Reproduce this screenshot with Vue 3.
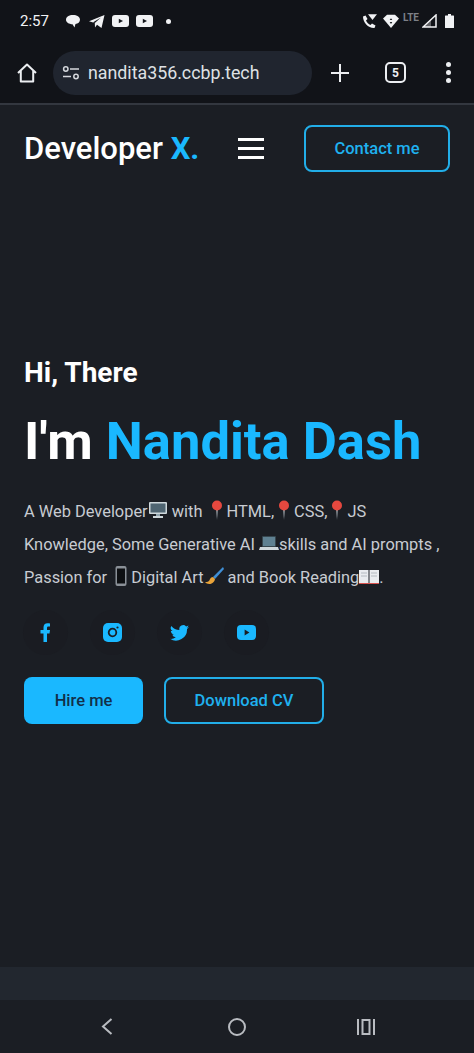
<template>
  <div class="phone">
    <header class="chrome">
      <div class="status">
        <span class="time">2:57</span>
        <div class="status-left">
          <svg width="16" height="15" viewBox="0 0 16 15"><path d="M8 1c4 0 7 1.800 7 4.700 0 2.300-2 4-4.500 4.400L9.500 13.500 7.500 10.300C4 10 1 8.300 1 5.700 1 2.800 4 1 8 1z" fill="#f1f2f4"/></svg>
          <svg width="17" height="15" viewBox="0 0 17 15"><path d="M16.500 1 13.500 14 9 10.800 7 13.500 6.800 9 1 7.200zM6.800 9l6.200-5.500-7.800 4.800z" fill="#f1f2f4"/></svg>
          <svg v-for="n in 2" :key="n" width="17" height="12" viewBox="0 0 17 12"><rect width="17" height="12" rx="3" fill="#f1f2f4"/><path d="M6.800 3.700v4.600L11 6z" fill="#14161b"/></svg>
          <i class="dot"></i>
        </div>
        <div class="status-right">
          <svg width="16" height="16" viewBox="0 0 16 16"><path d="M1 3.500 3.500 2.500 5.500 6 4 7.500C5 9.500 6.500 11 8.500 12l1.500-1.500 3.500 2-1 2.500C6.500 15.500 1 9.500 1 3.500z" fill="#f1f2f4"/><path d="M6 1.200h9l-1.800 2.400L10.500 7 7.800 3.600z" fill="#f1f2f4"/></svg>
          <svg class="wifi" width="18" height="15" viewBox="0 0 18 15"><path d="M1 4.500 5 .8h8l4 3.700L9 14z" fill="#f1f2f4"/><path d="M9 4.300 7.700 6h2.600zM9 10 7.700 8h2.600z" fill="#14161b"/></svg>
          <span class="lte">LTE</span>
          <svg class="signal" width="15" height="14" viewBox="0 0 15 14"><path d="M14 1v12H1z" fill="none" stroke="#f1f2f4" stroke-width="1.500"/><path d="M1 13 9 5v8z" fill="#f1f2f4" opacity=".35"/></svg>
          <svg class="battery" width="9" height="14" viewBox="0 0 9 14"><path d="M3 0h3v1.500h2.500a.5.500 0 0 1 .5.500v11.500a.5.500 0 0 1-.5.500h-8a.5.500 0 0 1-.5-.500V2a.5.500 0 0 1 .5-.500H3z" fill="#f1f2f4"/></svg>
        </div>
      </div>
      <div class="toolbar">
        <svg class="home" width="22" height="22" viewBox="0 0 22 22"><path d="M2 11 11 2.500 20 11M4.800 9v10.500h12.400V9" fill="none" stroke="#eceef1" stroke-width="2" stroke-linejoin="round"/></svg>
        <div class="url">
          <svg width="18" height="14" viewBox="0 0 18 14" fill="none" stroke="#d5d8dd" stroke-width="1.500"><circle cx="3.800" cy="3" r="2.200"/><path d="M8 3h9M1 10.500h8"/><circle cx="14" cy="10.500" r="2.200"/></svg>
          <span>nandita356.ccbp.tech</span>
        </div>
        <svg class="plus" width="18" height="18" viewBox="0 0 18 18"><path d="M9 0v18M0 9h18" stroke="#eceef1" stroke-width="2"/></svg>
        <span class="tabs">5</span>
        <div class="more"><i></i><i></i><i></i></div>
      </div>
    </header>

    <main class="page">
      <nav class="nav">
        <span class="logo">Developer <b>X.</b></span>
        <div class="burger"><i></i><i></i><i></i></div>
        <button class="btn outline contact">Contact me</button>
      </nav>

      <section class="hero">
        <h2>Hi, There</h2>
        <h1>I'm <span>Nandita Dash</span></h1>
        <p>
          A Web Developer<svg class="emoji" viewBox="0 0 20 20"><rect x="1" y="2" width="18" height="12" rx="1" fill="#cfd8dc"/><rect x="2.500" y="3.500" width="15" height="9" fill="#4f6572"/><path d="M8 14h4v2H8z" fill="#90a4ae"/><rect x="5" y="16" width="10" height="2" fill="#cfd8dc"/></svg> with
          <svg class="emoji" viewBox="0 0 20 20"><use href="#pin-shape"/></svg>HTML,<svg class="emoji" viewBox="0 0 20 20"><use href="#pin-shape"/></svg>CSS,<svg class="emoji" viewBox="0 0 20 20"><use href="#pin-shape"/></svg>JS<br>
          Knowledge, Some Generative AI <svg class="emoji" viewBox="0 0 20 20"><rect x="3" y="3" width="14" height="11" rx="1" fill="#37474f"/><rect x="4" y="4" width="12" height="9" fill="#5f8192"/><path d="M1 14h18l1 3H0z" fill="#cfd8dc"/></svg>skills and AI prompts ,<br>
          Passion for <svg class="emoji" viewBox="0 0 20 20"><rect x="4.500" y="0" width="11" height="20" rx="2" fill="#8a9097"/><rect x="6" y="2.500" width="8" height="15" fill="#0d0f12"/></svg>Digital Art<svg class="emoji" viewBox="0 0 20 20"><path d="M19 1 9 11l2 2L20 3z" fill="#3f8fd6"/><path d="M9 11c-3 0-3 3-4 4s-3 1-4 1c2 3 9 3 10-3z" fill="#e8a33a"/></svg> and Book Reading<svg class="emoji" viewBox="0 0 20 20"><path d="M0 4h9.500v13H0zM10.500 4H20v13h-9.500z" fill="#e9ecef"/><path d="M2 7h6M2 10h6M12 7h6M12 10h6" stroke="#b4bac0"/><path d="M0 17h20v1H0z" fill="#d9534f"/></svg>.
        </p>
        <div class="socials">
          <a class="social">
            <svg width="12" height="19" viewBox="0 0 12 19"><path d="M3.500 19v-8.500H.5V7h3V4.500C3.500 1.800 5 .3 7.600.3c1.200 0 2.400.2 2.400.2v3H8.500C7.300 3.500 7 4.200 7 5v2h3l-.5 3.500H7V19z" fill="#1ab8ff"/></svg>
          </a>
          <a class="social">
            <svg width="19" height="19" viewBox="0 0 19 19"><rect width="19" height="19" rx="5" fill="#1ab8ff"/><circle cx="9.500" cy="9.500" r="3.800" fill="none" stroke="#1b1e24" stroke-width="1.800"/><circle cx="14.500" cy="4.500" r="1.100" fill="#1b1e24"/></svg>
          </a>
          <a class="social">
            <svg width="19" height="16" viewBox="0 0 24 20"><path d="M24 2.400a10 10 0 0 1-2.800.8A5 5 0 0 0 23.400.5a10 10 0 0 1-3.100 1.200 4.900 4.900 0 0 0-8.400 4.500A14 14 0 0 1 1.700 1a4.900 4.900 0 0 0 1.500 6.600 5 5 0 0 1-2.200-.6c0 2.400 1.700 4.400 3.900 4.900a5 5 0 0 1-2.200.1 4.900 4.900 0 0 0 4.600 3.400A9.900 9.900 0 0 1 0 17.400 14 14 0 0 0 21.500 5c1-.7 1.900-1.600 2.500-2.600z" fill="#1ab8ff"/></svg>
          </a>
          <a class="social">
            <svg width="19" height="15" viewBox="0 0 19 15"><rect width="19" height="15" rx="4" fill="#1ab8ff"/><path d="M7.600 4.600v5.800l4.800-2.900z" fill="#1b1e24"/></svg>
          </a>
        </div>
        <div class="actions">
          <button class="btn solid">Hire me</button>
          <button class="btn outline cv">Download CV</button>
        </div>
      </section>
    </main>

    <div class="strip"></div>
    <footer class="sysnav">
      <svg width="12" height="17" viewBox="0 0 12 17"><path d="M10.500 1 2 8.500l8.500 7.500" fill="none" stroke="#b9bcc1" stroke-width="2"/></svg>
      <svg class="circle" width="18" height="18" viewBox="0 0 18 18"><circle cx="9" cy="9" r="8" fill="none" stroke="#b9bcc1" stroke-width="2"/></svg>
      <svg width="18" height="16" viewBox="0 0 18 16" fill="none" stroke="#b9bcc1" stroke-width="2"><path d="M1 0v16M17 0v16"/><rect x="5.500" y="1" width="7" height="14"/></svg>
    </footer>

    <svg width="0" height="0" class="defs"><defs><g id="pin-shape"><path d="M9.200 9h1.600l-.8 11z" fill="#b8bfc5"/><circle cx="10" cy="5.500" r="5" fill="#e5483f"/></g></defs></svg>
  </div>
</template>

<script setup>
</script>

<style>
html,
body {
  margin: 0;
  background: #1b1e24;
}
</style>

<style scoped>
.phone {
  width: 474px;
  height: 1053px;
  display: flex;
  flex-direction: column;
  overflow: hidden;
  font-family: Roboto, "Liberation Sans", sans-serif;
  background: #1b1e24;
}

.chrome {
  height: 103px;
  flex: none;
  background: #111318;
  border-bottom: 2px solid #33373f;
}

.status {
  height: 42px;
  padding: 0 20px;
  display: flex;
  align-items: center;
  color: #f1f2f4;
}

.time {
  font-size: 15px;
  width: 45px;
}

.status-left {
  display: flex;
  align-items: center;
  gap: 7px;
}

.dot {
  width: 5px;
  height: 5px;
  margin-left: 6px;
  border-radius: 50%;
  background: #f1f2f4;
}

.status-right {
  margin-left: auto;
  display: flex;
  align-items: center;
  gap: 2px;
}

.wifi {
  margin-left: 2px;
}

.lte {
  font-size: 10px;
  line-height: 10px;
  font-weight: 700;
  color: #7d8087;
  align-self: flex-start;
  margin: 0 1px 0 1px;
}

.battery {
  margin-left: 6px;
}

.toolbar {
  height: 61px;
  display: flex;
  align-items: center;
  padding: 0 0 11px 16px;
}

.url {
  width: 259px;
  height: 44px;
  margin-left: 15px;
  box-sizing: border-box;
  padding: 0 0 0 9px;
  border-radius: 22px;
  background: #20252f;
  display: flex;
  align-items: center;
  gap: 8px;
  color: #dfe1e5;
  font-size: 17.800px;
}

.plus {
  margin-left: 19px;
}

.tabs {
  margin-left: 36px;
  width: 17px;
  height: 17px;
  border: 2px solid #eceef1;
  border-radius: 5px;
  color: #eceef1;
  font-size: 12px;
  font-weight: 700;
  display: flex;
  align-items: center;
  justify-content: center;
}

.more {
  margin-left: 40px;
  display: flex;
  flex-direction: column;
  gap: 3px;
}

.more i {
  width: 5px;
  height: 5px;
  border-radius: 50%;
  background: #eceef1;
}

.page {
  flex: 1;
  min-height: 0;
}

.nav {
  height: 87px;
  padding: 0 24px;
  display: flex;
  align-items: center;
  color: #fff;
}

.logo {
  font-size: 31px;
  font-weight: 500;
  width: 214px;
}

.logo b {
  color: #1ab8ff;
  font-weight: 700;
}

.burger {
  display: flex;
  flex-direction: column;
  gap: 5.500px;
  width: 66px;
}

.burger i {
  width: 26px;
  height: 3.500px;
  background: #fff;
}

.btn {
  box-sizing: border-box;
  height: 47px;
  border-radius: 8px;
  font-family: inherit;
  font-size: 16.500px;
  font-weight: 500;
}

.outline {
  background: transparent;
  color: #1fb1ef;
  border: 2px solid #22aee8;
}

.contact {
  width: 146px;
}

.hero {
  padding: 165px 24px 0;
}

.hero h2 {
  margin: 0;
  font-size: 28px;
  line-height: 32px;
  font-weight: 700;
  color: #fff;
}

.hero h1 {
  margin: 22px 0 0;
  font-size: 52.500px;
  line-height: 61px;
  font-weight: 700;
  color: #fff;
}

.hero h1 span {
  color: #1ab8ff;
}

.hero p {
  margin: 23px 0 0;
  font-size: 16.400px;
  line-height: 33px;
  color: #c8ccd2;
}

.emoji {
  width: 20px;
  height: 20px;
  vertical-align: -3px;
}

.socials {
  margin: 16px 0 0 -1px;
  display: flex;
  gap: 22px;
}

.social {
  width: 45px;
  height: 45px;
  border-radius: 50%;
  background: #1a1c22;
  display: flex;
  align-items: center;
  justify-content: center;
}

.actions {
  margin-top: 22px;
  display: flex;
  gap: 21px;
}

.solid {
  width: 119px;
  background: #1ab8ff;
  color: #12304a;
  border: 0;
}

.cv {
  width: 160px;
}

.strip {
  height: 33px;
  flex: none;
  background: #22272f;
}

.sysnav {
  height: 53px;
  flex: none;
  background: #1b1e24;
  display: flex;
  align-items: center;
  padding: 0 99px 0 101px;
  justify-content: space-between;
}

.circle {
  margin-left: 4px;
}

.defs {
  position: absolute;
}
</style>
